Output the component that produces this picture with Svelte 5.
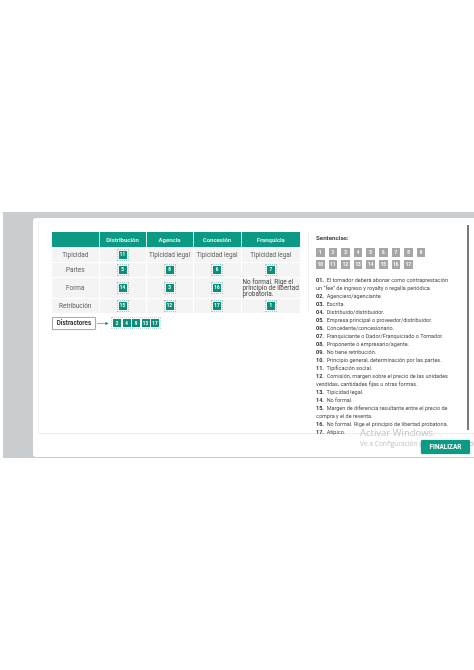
<script>
  const rows = [
    { label: 'Tipicidad', h: 'r15', cells: [{ n: 11 }, { t: 'Tipicidad legal' }, { t: 'Tipicidad legal' }, { t: 'Tipicidad legal' }] },
    { label: 'Partes', h: 'r15', cells: [{ n: 5 }, { n: 8 }, { n: 6 }, { n: 7 }] },
    { label: 'Forma', h: 'r21', cells: [{ n: 14 }, { n: 3 }, { n: 16 }, { long: 'No formal. Rige el principio de libertad probatoria.' }] },
    { label: 'Retribución', h: 'r15', cells: [{ n: 15 }, { n: 12 }, { n: 17 }, { n: 1 }] }
  ];
  const heads = ['Distribución', 'Agencia', 'Concesión', 'Franquicia'];
  const distract = [2, 4, 9, 13, 17];
  const nums = Array.from({ length: 17 }, (_, i) => i + 1);
  const sentences = [
    ['01.', 'El tomador deberá abonar como contraprestación un “fee” de ingreso y royalty o regalía periódica.'],
    ['02.', 'Agenciero/agenciante.'],
    ['03.', 'Escrita.'],
    ['04.', 'Distribuido/distribuidor.'],
    ['05.', 'Empresa principal o proveedor/distribuidor.'],
    ['06.', 'Concedente/concesionario.'],
    ['07.', 'Franquiciante o Dador/Franquiciado o Tomador.'],
    ['08.', 'Proponente o empresario/agente.'],
    ['09.', 'No tiene retribución.'],
    ['10.', 'Principio general, determinación por las partes.'],
    ['11.', 'Tipificación social.'],
    ['12.', 'Comisión, margen sobre el precio de las unidades vendidas, cantidades fijas u otras formas.'],
    ['13.', 'Tipicidad legal.'],
    ['14.', 'No formal.'],
    ['15.', 'Margen de diferencia resultante entre el precio de compra y el de reventa.'],
    ['16.', 'No formal. Rige el principio de libertad probatoria.'],
    ['17.', 'Atípico.']
  ];
</script>

<div class="band">
  <div class="card">
    <div class="inner">
      <div class="left">
        <table>
          <thead>
            <tr>
              <th></th>
              {#each heads as h}<th>{h}</th>{/each}
            </tr>
          </thead>
          <tbody>
            {#each rows as r}
              <tr class={r.h}>
                <td>{r.label}</td>
                {#each r.cells as c}
                  <td class:long={c.long}>
                    {#if c.n}
                      <span class="drop"><span class="chip">{c.n}</span></span>
                    {:else if c.long}
                      {c.long}
                    {:else}
                      {c.t}
                    {/if}
                  </td>
                {/each}
              </tr>
            {/each}
          </tbody>
        </table>
        <div class="distract">
          <div class="dbtn">Distractores</div>
          <svg class="arrow" width="12" height="5" viewBox="0 0 12 5">
            <path d="M0 2.5H9" stroke="#3f9d8d" stroke-width="0.7" fill="none" />
            <path d="M8.5 0.8L11.5 2.5L8.5 4.2Z" fill="#0b8f79" />
          </svg>
          <div class="dropbox">
            {#each distract as d}<span class="chip small">{d}</span>{/each}
          </div>
        </div>
      </div>
      <div class="right">
        <div class="title">Sentencias:</div>
        <div class="grid">
          {#each nums as n}<span class="gchip">{n}</span>{/each}
        </div>
        <div class="list">
          {#each sentences as s}
            <p><b>{s[0]}</b>&nbsp; {s[1]}</p>
          {/each}
        </div>
      </div>
      <div class="scrollbar"></div>
    </div>
    <div class="footer">
      <div class="watermark">
        <div class="wm1">Activar Windows</div>
        <div class="wm2">Ve a Configuración para activar Windows</div>
      </div>
      <button class="finish">FINALIZAR</button>
    </div>
  </div>
</div>

<style>
  :global(body) {
    margin: 0;
    background: #fff;
    font-family: Roboto, "Liberation Sans", sans-serif;
    overflow: hidden;
  }
  .band {
    margin: 212px 0 0 3px;
    height: 246px;
    box-sizing: border-box;
    padding: 6px 0 1px 30px;
    background: #c9cdd0;
    overflow: hidden;
    filter: blur(0.4px);
  }
  .card {
    height: 239px;
    background: #fff;
    border-radius: 3px 0 0 3px;
    padding: 4px 0 0 5px;
    box-sizing: border-box;
  }
  .inner {
    position: relative;
    display: flex;
    height: 212px;
    box-sizing: border-box;
    border-left: 1px solid #f0f0f0;
    border-bottom: 1px solid #ececec;
  }
  .left {
    width: 262px;
    padding: 10px 0 0 13px;
    box-sizing: border-box;
    flex: none;
  }
  table {
    border-collapse: collapse;
    table-layout: fixed;
    width: 248px;
    font-size: 6.4px;
    color: #5c5c5c;
  }
  th {
    box-sizing: border-box;
    background: #0b9a83;
    color: #d5efea;
    height: 15px;
    padding: 0;
    font-size: 6px;
    font-weight: 700;
    width: 47px;
    border-left: 1px solid #cfe9e4;
  }
  th:first-child { border-left: 0; }
  th:nth-child(4) { width: 48px; }
  th:last-child { width: 59px; }
  td {
    background: #f4f4f4;
    border: 1px solid #fff;
    border-width: 1px 0 0 1px;
    text-align: center;
    padding: 0;
    line-height: 6px;
  }
  td:first-child { border-left: 0; }
  .r15 td { height: 14px; }
  .r21 td { height: 20px; }
  td.long {
    text-align: left;
    padding-left: 1px;
    color: #444;
  }
  .drop {
    display: inline-flex;
    padding: 1px;
    border: 1px dotted #9fcfc6;
    vertical-align: middle;
  }
  .chip {
    display: inline-flex;
    width: 8px;
    height: 8px;
    align-items: center;
    justify-content: center;
    background: #0b8f79;
    color: #fff;
    font-size: 4.6px;
    font-weight: 700;
  }
  .distract {
    display: flex;
    align-items: center;
    margin-top: 4px;
  }
  .dbtn {
    width: 44px;
    height: 13px;
    box-sizing: border-box;
    border: 1px solid #aaa;
    border-radius: 1px;
    font-size: 6.3px;
    font-weight: 700;
    color: #333;
    display: flex;
    align-items: center;
    justify-content: center;
    box-shadow: 0 0 1px #ccc;
    background: #fff;
  }
  .arrow { margin: 0 2px 0 1px; flex: none; }
  .dropbox {
    display: flex;
    gap: 1.5px;
    padding: 1px;
    border: 1px dotted #bfdcd6;
  }
  .right {
    flex: none;
    width: 157px;
    margin: 10px 0 0 7px;
    box-sizing: border-box;
    padding: 2px 0 0 7px;
    border-left: 1px solid #f0f0f0;
    height: 80px;
    overflow: visible;
  }
  .title {
    font-size: 6.2px;
    font-weight: 700;
    color: #444;
    line-height: 8px;
  }
  .grid {
    display: grid;
    grid-template-columns: repeat(9, 8.6px);
    column-gap: 4px;
    row-gap: 3.4px;
    margin-top: 6px;
  }
  .gchip {
    height: 8.6px;
    background: #a6a6a6;
    color: #fff;
    font-size: 4.6px;
    font-weight: 700;
    display: flex;
    align-items: center;
    justify-content: center;
  }
  .list {
    margin-top: 7px;
    width: 138px;
    font-size: 5.5px;
    line-height: 8px;
    color: #4c4c4c;
  }
  .list p { margin: 0; }
  .list b { color: #333; }
  .scrollbar {
    position: absolute;
    left: 428px;
    top: 3px;
    width: 1.5px;
    height: 205px;
    background: #77797b;
  }
  .footer {
    position: relative;
    display: flex;
    justify-content: flex-end;
    padding: 6px 4px 0 0;
  }
  .watermark {
    position: absolute;
    left: 322px;
    top: -7px;
    color: #c2c2c2;
    white-space: nowrap;
  }
  .wm1 { font-size: 9.5px; line-height: 12px; font-family: "Open Sans", sans-serif; }
  .wm2 { font-size: 6.6px; line-height: 10px; font-family: "Open Sans", sans-serif; }
  .finish {
    position: relative;
    width: 49px;
    height: 14px;
    border: 0;
    border-radius: 1px;
    padding: 0;
    background: #0b9a83;
    color: #fff;
    font-family: inherit;
    font-size: 6.4px;
    font-weight: 700;
    box-shadow: 0 0 2px #9ccfc6;
  }
</style>
